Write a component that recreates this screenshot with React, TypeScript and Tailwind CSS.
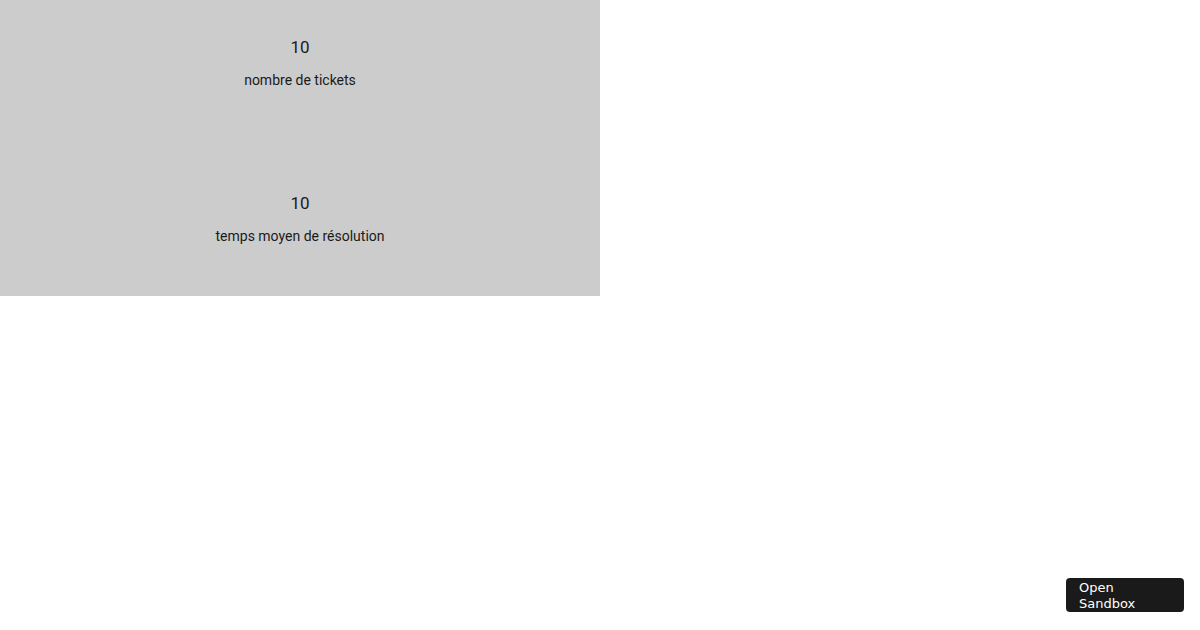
export default function App() {
  const cards = [
    { value: "10", label: "nombre de tickets" },
    { value: "10", label: "temps moyen de résolution" },
  ];
  return (
    <div className="relative h-[630px] w-[1200px] bg-white" style={{ fontFamily: "Roboto, 'Liberation Sans', sans-serif" }}>
      <div className="flex w-[600px] flex-col gap-4 bg-[#cccccc]">
        {cards.map((c, i) => (
          <div key={i} className="flex h-[140px] flex-col items-center pt-[35px] text-[#1a1a1a]">
            <div className="text-[17px] font-normal leading-6">{c.value}</div>
            <div className="mt-[11px] text-[14px] leading-5">{c.label}</div>
          </div>
        ))}
      </div>
      <button
        className="absolute left-[1066px] top-[578px] h-[34px] w-[118px] rounded-[4px] bg-[#1a1a1a] pl-[13px] pt-[2px] text-left text-[13px] leading-4 text-white"
        style={{ fontFamily: "'DejaVu Sans', sans-serif" }}
      >
        Open
        <br />
        Sandbox
      </button>
    </div>
  );
}
